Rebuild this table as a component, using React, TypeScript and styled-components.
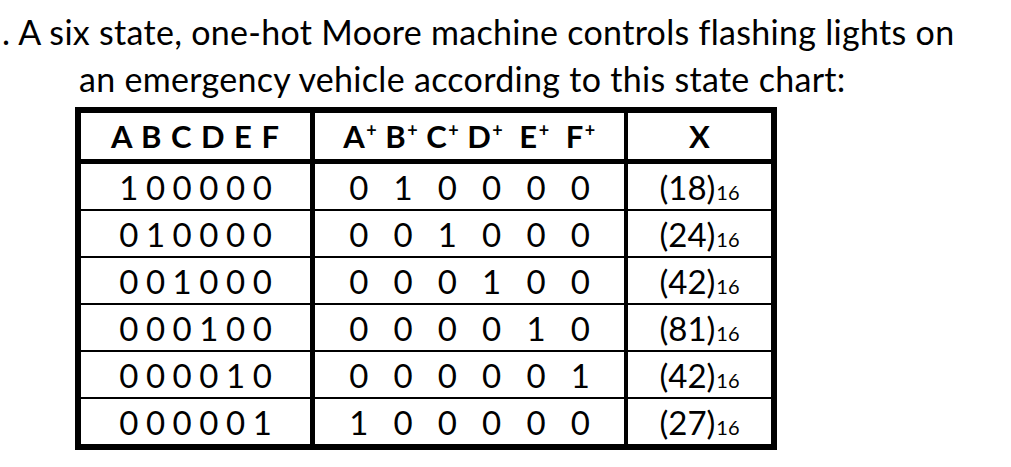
import React from 'react';
import styled, { createGlobalStyle } from 'styled-components';

const GlobalStyle = createGlobalStyle`
  html, body {
    margin: 0;
    padding: 0;
    background: #ffffff;
  }
  body {
    font-family: Lato, "Open Sans", sans-serif;
    color: #000000;
  }
`;

const Page = styled.div`
  width: 1011px;
  height: 467px;
  overflow: hidden;
  padding-top: 8px;
  box-sizing: border-box;
`;

const Question = styled.p`
  margin: 0;
  padding-left: 79px;
  text-indent: -77px;
  font-size: 34px;
  letter-spacing: 0.3px;
  line-height: 47px;
  white-space: nowrap;
`;

const Chart = styled.div`
  margin: 5px 0 0 75px;
  width: 702px;
  display: grid;
  grid-template-columns: 234px 313px 143px;
  border: 6px solid #000;
  box-sizing: border-box;
`;

const Cell = styled.div<{ $divider?: number; $line?: number; $head?: boolean }>`
  height: ${p => (p.$head ? 46 : 45)}px;
  display: flex;
  align-items: center;
  justify-content: center;
  border-right: ${p => p.$divider || 0}px solid #000;
  border-bottom: ${p => p.$line || 0}px solid #000;
  font-size: ${p => (p.$head ? 31 : 33)}px;
  font-weight: ${p => (p.$head ? 700 : 400)};
  white-space: pre;
`;

const HeadText = styled.span<{ $spacing?: number }>`
  letter-spacing: ${p => p.$spacing || 0}px;
`;

const Plus = styled.sup`
  font-size: 18px;
  vertical-align: 11px;
  line-height: 0;
  margin-left: 1px;
`;

const Bits = styled.div`
  display: flex;
`;

const Bit = styled.span<{ $pitch: number }>`
  width: ${p => p.$pitch}px;
  text-align: center;
`;

const Hex = styled.span`
  display: inline-flex;
  align-items: baseline;
`;

const Base = styled.sub`
  font-size: 20px;
  vertical-align: -3px;
  line-height: 0;
  margin-left: 1px;
`;

const rows = [
  { state: '100000', next: '010000', x: '18' },
  { state: '010000', next: '001000', x: '24' },
  { state: '001000', next: '000100', x: '42' },
  { state: '000100', next: '000010', x: '81' },
  { state: '000010', next: '000001', x: '42' },
  { state: '000001', next: '100000', x: '27' },
];

function BitRow({ bits, pitch }: { bits: string; pitch: number }) {
  return (
    <Bits>
      {bits.split('').map((b, i) => (
        <Bit key={i} $pitch={pitch}>{b}</Bit>
      ))}
    </Bits>
  );
}

export default function App() {
  return (
    <Page>
      <GlobalStyle />
      <Question>
        . A six state, one-hot Moore machine controls flashing lights on
        <br />
        an emergency vehicle according to this state chart:
      </Question>
      <Chart>
        <Cell $head $divider={5} $line={5}>
          <HeadText $spacing={1}>A B C D E F</HeadText>
        </Cell>
        <Cell $head $divider={4} $line={5}>
          <HeadText $spacing={0.5}>
            A<Plus>+</Plus> B<Plus>+</Plus> C<Plus>+</Plus> D<Plus>+</Plus>{'  '}E<Plus>+</Plus>{'  '}F<Plus>+</Plus>
          </HeadText>
        </Cell>
        <Cell $head $line={5}>X</Cell>
        {rows.map((r, i) => {
          const line = i < rows.length - 1 ? 2 : 0;
          return (
            <React.Fragment key={i}>
              <Cell $divider={5} $line={line}>
                <BitRow bits={r.state} pitch={26.7} />
              </Cell>
              <Cell $divider={4} $line={line}>
                <BitRow bits={r.next} pitch={44.3} />
              </Cell>
              <Cell $line={line}>
                <Hex>
                  ({r.x})<Base>16</Base>
                </Hex>
              </Cell>
            </React.Fragment>
          );
        })}
      </Chart>
    </Page>
  );
}
